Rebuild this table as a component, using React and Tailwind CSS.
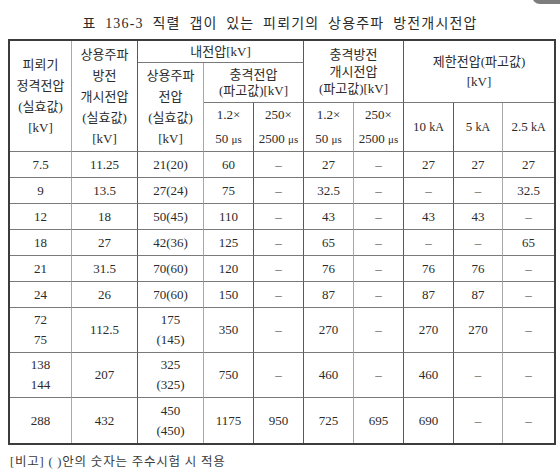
const serif = { fontFamily: '"Liberation Serif", "Noto Sans CJK KR", serif' }

const rows = [
  { h: 'h-[26px]', c: ['7.5', '11.25', '21(20)', '60', '-', '27', '-', '27', '27', '27'] },
  { h: 'h-[26px]', c: ['9', '13.5', '27(24)', '75', '-', '32.5', '-', '-', '-', '32.5'] },
  { h: 'h-[26px]', c: ['12', '18', '50(45)', '110', '-', '43', '-', '43', '43', '-'] },
  { h: 'h-[26px]', c: ['18', '27', '42(36)', '125', '-', '65', '-', '-', '-', '65'] },
  { h: 'h-[26px]', c: ['21', '31.5', '70(60)', '120', '-', '76', '-', '76', '76', '-'] },
  { h: 'h-[26px]', c: ['24', '26', '70(60)', '150', '-', '87', '-', '87', '87', '-'] },
  { h: 'h-[45px]', c: [['72', '75'], '112.5', ['175', '(145)'], '350', '-', '270', '-', '270', '270', '-'] },
  { h: 'h-[45px]', c: [['138', '144'], '207', ['325', '(325)'], '750', '-', '460', '-', '460', '-', '-'] },
  { h: 'h-[45px]', c: ['288', '432', ['450', '(450)'], '1175', '950', '725', '695', '690', '-', '-'] },
]

// right border colour per column: dark or light grey lines
const vline = [
  'border-r-[#a8a8a8]',
  'border-r-[#5a5a5a]',
  'border-r-[#a8a8a8]',
  'border-r-[#5a5a5a]',
  'border-r-[#5a5a5a]',
  'border-r-[#a8a8a8]',
  'border-r-[#5a5a5a]',
  'border-r-[#5a5a5a]',
  'border-r-[#a8a8a8]',
  'border-r-0',
]

const cell = 'border-b border-r border-b-[#7a7a7a] p-0 text-center align-middle'

function Us({ n }) {
  return (
    <span>
      {n} <span className="text-[11px]">μs</span>
    </span>
  )
}

function Value({ v }) {
  if (Array.isArray(v)) {
    return (
      <div className="leading-[20px]">
        <div>{v[0]}</div>
        <div>{v[1]}</div>
      </div>
    )
  }
  return v === '-' ? <span className="text-[#555]">–</span> : v
}

export default function App() {
  return (
    <div className="relative h-[472px] w-[560px] overflow-hidden bg-white text-[#2b2b2b]" style={serif}>
      <div className="absolute right-[-8px] top-[-12px] h-[16px] w-[36px] rounded-full bg-[#7d7d7d]" />

      <div className="pt-[15px] text-center text-[14px] leading-[18px] tracking-[1.2px] [word-spacing:4px]">
        표 136-3 직렬 갭이 있는 피뢰기의 상용주파 방전개시전압
      </div>

      <table className="ml-[8px] mt-[6px] w-[546px] table-fixed border-separate border-spacing-0 border-2 border-[#3c3c3c] text-[13px]">
        <colgroup>
          <col className="w-[62px]" />
          <col className="w-[66px]" />
          <col className="w-[66px]" />
          <col className="w-[50px]" />
          <col className="w-[50px]" />
          <col className="w-[50px]" />
          <col className="w-[50px]" />
          <col className="w-[50px]" />
          <col className="w-[49px]" />
          <col className="w-[51px]" />
        </colgroup>
        <thead>
          <tr className="h-[22px]">
            <td rowSpan={3} className={`${cell} ${vline[0]} leading-[21px]`}>
              피뢰기<br />정격전압<br />(실효값)<br />[kV]
            </td>
            <td rowSpan={3} className={`${cell} ${vline[1]} leading-[21px]`}>
              상용주파<br />방전<br />개시전압<br />(실효값)<br />[kV]
            </td>
            <td colSpan={3} className={`${cell} ${vline[4]}`}>
              내전압[kV]
            </td>
            <td colSpan={2} rowSpan={2} className={`${cell} ${vline[6]} leading-[17px]`}>
              충격방전<br />개시전압<br />(파고값)[kV]
            </td>
            <td colSpan={3} rowSpan={2} className={`${cell} ${vline[9]} leading-[20px]`}>
              제한전압(파고값)<br />[kV]
            </td>
          </tr>
          <tr className="h-[40px]">
            <td rowSpan={2} className={`${cell} ${vline[2]} leading-[21px]`}>
              상용주파<br />전압<br />(실효값)<br />[kV]
            </td>
            <td colSpan={2} className={`${cell} ${vline[4]} leading-[16px]`}>
              충격전압<br />(파고값)[kV]
            </td>
          </tr>
          <tr className="h-[48px]">
            <td className={`${cell} ${vline[3]} leading-[24px]`}>
              1.2×<br /><Us n="50" />
            </td>
            <td className={`${cell} ${vline[4]} leading-[24px]`}>
              250×<br /><Us n="2500" />
            </td>
            <td className={`${cell} ${vline[5]} leading-[24px]`}>
              1.2×<br /><Us n="50" />
            </td>
            <td className={`${cell} ${vline[6]} leading-[24px]`}>
              250×<br /><Us n="2500" />
            </td>
            <td className={`${cell} ${vline[7]}`}>
              10 <span className="text-[12px]">kA</span>
            </td>
            <td className={`${cell} ${vline[8]}`}>
              5 <span className="text-[12px]">kA</span>
            </td>
            <td className={`${cell} ${vline[9]}`}>
              2.5 <span className="text-[12px]">kA</span>
            </td>
          </tr>
        </thead>
        <tbody>
          {rows.map((r, i) => (
            <tr className={r.h} key={i}>
              {r.c.map((v, j) => (
                <td
                  key={j}
                  className={`${cell} ${vline[j]} ${i === rows.length - 1 ? 'border-b-0' : ''}`}
                >
                  <Value v={v} />
                </td>
              ))}
            </tr>
          ))}
        </tbody>
      </table>

      <p className="ml-[10px] mt-[8px] text-[12.5px] leading-[18px] tracking-[0.8px] text-[#3a3a3a]">
        [비고] ( )안의 숫자는 주수시험 시 적용
      </p>
    </div>
  )
}
